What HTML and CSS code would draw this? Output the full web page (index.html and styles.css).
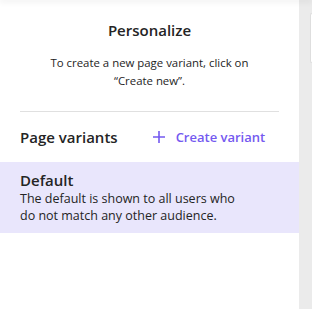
FILE: index.html
```html
<!DOCTYPE html>
<html lang="en">
<head>
    <meta charset="UTF-8">
    <title>Personalize</title>
    <link rel="stylesheet" href="styles.css">
</head>
<body>
    <div class="topbar"></div>
    <div class="layout">
        <div class="panel">
            <h2 class="panel-title">Personalize</h2>
            <p class="panel-intro">To create a new page variant, click on “Create new”.</p>
            <hr class="divider">
            <div class="variants-header">
                <h3>Page variants</h3>
                <button class="create-btn">
                    <svg width="14" height="14" viewBox="0 0 14 14"><path d="M7 1v12M1 7h12" stroke="currentColor" stroke-width="1.6" fill="none"/></svg>
                    <span>Create variant</span>
                </button>
            </div>
            <div class="variant selected">
                <div class="variant-name">Default</div>
                <div class="variant-desc">The default is shown to all users who do not match any other audience.</div>
            </div>
        </div>
        <div class="side">
            <div class="side-card"></div>
        </div>
    </div>
</body>
</html>
```

FILE: styles.css
```css
body {
    margin: 0;
    font-family: 'Open Sans', 'Noto Sans', sans-serif;
    color: #242424;
    background-color: #ffffff;
}
.topbar {
    height: 0;
    position: relative;
    z-index: 10;
    box-shadow: 0 0 6px 1px rgba(0, 0, 0, 0.14);
}
.layout {
    display: flex;
    height: 309px;
}
.panel {
    width: 299px;
    background-color: #ffffff;
}
.panel-title {
    margin: 19px 0 0;
    text-align: center;
    font-size: 15px;
    line-height: 22px;
    font-weight: 600;
}
.panel-intro {
    margin: 13px auto 0;
    max-width: 210px;
    text-align: center;
    font-size: 11.4px;
    line-height: 18px;
}
.divider {
    margin: 21px 20px 0;
    border: none;
    border-top: 1px solid #e0e0e0;
}
.variants-header {
    display: flex;
    align-items: center;
    height: 50px;
    padding: 0 20px;
}
.variants-header h3 {
    margin: 0;
    font-size: 15px;
    font-weight: 600;
}
.create-btn {
    display: flex;
    align-items: center;
    gap: 10px;
    margin-left: 34px;
    padding: 0;
    border: none;
    background: transparent;
    color: #7459f0;
    font-family: inherit;
    font-size: 13px;
    font-weight: 600;
    cursor: pointer;
}
.variant {
    padding: 8px 20px 9px;
}
.variant.selected {
    background-color: #e9e6fc;
}
.variant-name {
    font-size: 15px;
    line-height: 20px;
    font-weight: 600;
}
.variant-desc {
    max-width: 225px;
    font-size: 12.5px;
    line-height: 17px;
}
.side {
    flex: 1;
    background-color: #ebebeb;
    padding: 13px 0 0 11px;
}
.side-card {
    height: 48px;
    background-color: #ffffff;
    border: 1px solid #dedede;
    border-right: none;
    border-radius: 4px 0 0 4px;
}
```
